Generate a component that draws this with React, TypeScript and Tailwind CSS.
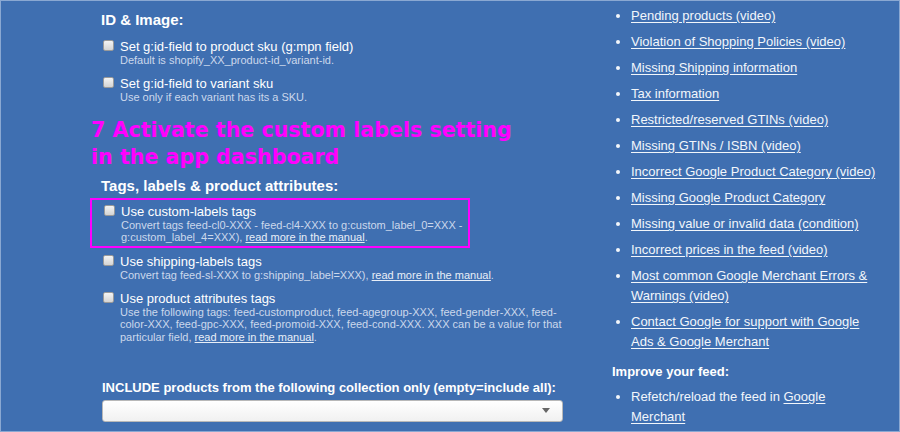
import React from "react";

const Box = () => (
  <span className="mt-[1px] block h-[11px] w-[11px] shrink-0 rounded-[2px] border border-[#9a9a9a] bg-gradient-to-b from-[#f4f4f4] to-[#d4d4d4]" />
);

function Item({ label, children }: { label: string; children: React.ReactNode }) {
  return (
    <div className="ml-[2px] flex gap-[6px]">
      <Box />
      <div>
        <div className="text-[13px] leading-[15px] text-white">{label}</div>
        <div className="text-[11px] leading-[12.5px] text-[#ccd8ec]">{children}</div>
      </div>
    </div>
  );
}

const Read = () => (
  <>
    <span className="text-[#e8eef7] underline underline-offset-[1px]">read more in the manual</span>.
  </>
);

const links: string[] = [
  "Pending products (video)",
  "Violation of Shopping Policies (video)",
  "Missing Shipping information",
  "Tax information",
  "Restricted/reserved GTINs (video)",
  "Missing GTINs / ISBN (video)",
  "Incorrect Google Product Category (video)",
  "Missing Google Product Category",
  "Missing value or invalid data (condition)",
  "Incorrect prices in the feed (video)",
  "Most common Google Merchant Errors & Warnings (video)",
  "Contact Google for support with Google Ads & Google Merchant",
];

export default function App() {
  return (
    <div
      className="flex h-[432px] w-[900px] overflow-hidden border border-[#8aa8d2] bg-[#3f6fb1]"
      style={{ fontFamily: '"Liberation Sans", Arial, sans-serif' }}
    >
      <div className="ml-[89px] flex w-[480px] flex-col pt-[10px]">
        <div className="pl-[11px] text-[15px] font-bold leading-[18px] text-white">ID &amp; Image:</div>
        <div className="mt-[9.5px] pl-[11px]">
          <Item label="Set g:id-field to product sku (g:mpn field)">
            Default is shopify_XX_product-id_variant-id.
          </Item>
        </div>
        <div className="mt-[9.5px] pl-[11px]">
          <Item label="Set g:id-field to variant sku">Use only if each variant has its a SKU.</Item>
        </div>
        <div
          className="mt-[13.5px] pl-[1px] text-[20.6px] font-bold leading-[27px] text-[#ff00ff]"
          style={{ fontFamily: '"DejaVu Sans", Verdana, sans-serif' }}
        >
          7 Activate the custom labels setting
          <br />
          in the app dashboard
        </div>
        <div className="mt-[6.5px] pl-[11px] text-[15px] font-bold leading-[18px] text-white">
          Tags, labels &amp; product attributes:
        </div>
        <div className="mt-[3px] w-[380px] border-2 border-[#ff00ff] pb-[2.5px] pl-[10px] pt-[3.5px]">
          <Item label="Use custom-labels tags">
            Convert tags feed-cl0-XXX - feed-cl4-XXX to g:custom_label_0=XXX -
            <br />
            g:custom_label_4=XXX), <Read />
          </Item>
        </div>
        <div className="mt-[5.5px] pl-[11px]">
          <Item label="Use shipping-labels tags">
            Convert tag feed-sl-XXX to g:shipping_label=XXX), <Read />
          </Item>
        </div>
        <div className="mt-[9.5px] pl-[11px]">
          <Item label="Use product attributes tags">
            Use the following tags: feed-customproduct, feed-agegroup-XXX, feed-gender-XXX, feed-
            <br />
            color-XXX, feed-gpc-XXX, feed-promoid-XXX, feed-cond-XXX. XXX can be a value for that
            <br />
            particular field, <Read />
          </Item>
        </div>
        <div className="mt-[36.5px] pl-[12px] text-[13px] font-bold leading-[16px] text-white">
          INCLUDE products from the following collection only (empty=include all):
        </div>
        <div className="ml-[12px] mt-[4px] flex h-[22px] w-[461px] items-center justify-end rounded-[3px] border border-[#b8b8b8] bg-gradient-to-b from-white to-[#f1f1f1] pr-[12px]">
          <svg width="8" height="5" viewBox="0 0 8 5">
            <path d="M0 0 L8 0 L4 5 Z" fill="#666" />
          </svg>
        </div>
      </div>

      <div className="ml-[42px] w-[266px] pt-[5px] text-[13px] leading-[20px] text-[#f2f6fb]">
        <ul className="list-disc pl-[19px]">
          {links.map((l) => (
            <li key={l} className="mb-[6px]">
              <span className="underline underline-offset-[2px]">{l}</span>
            </li>
          ))}
        </ul>
        <div className="mt-[12px] text-[13px] font-bold leading-[16px] text-white">Improve your feed:</div>
        <ul className="mt-[7px] list-disc pl-[19px]">
          <li>
            Refetch/reload the feed in <span className="underline underline-offset-[2px]">Google Merchant</span>
          </li>
        </ul>
      </div>
    </div>
  );
}
